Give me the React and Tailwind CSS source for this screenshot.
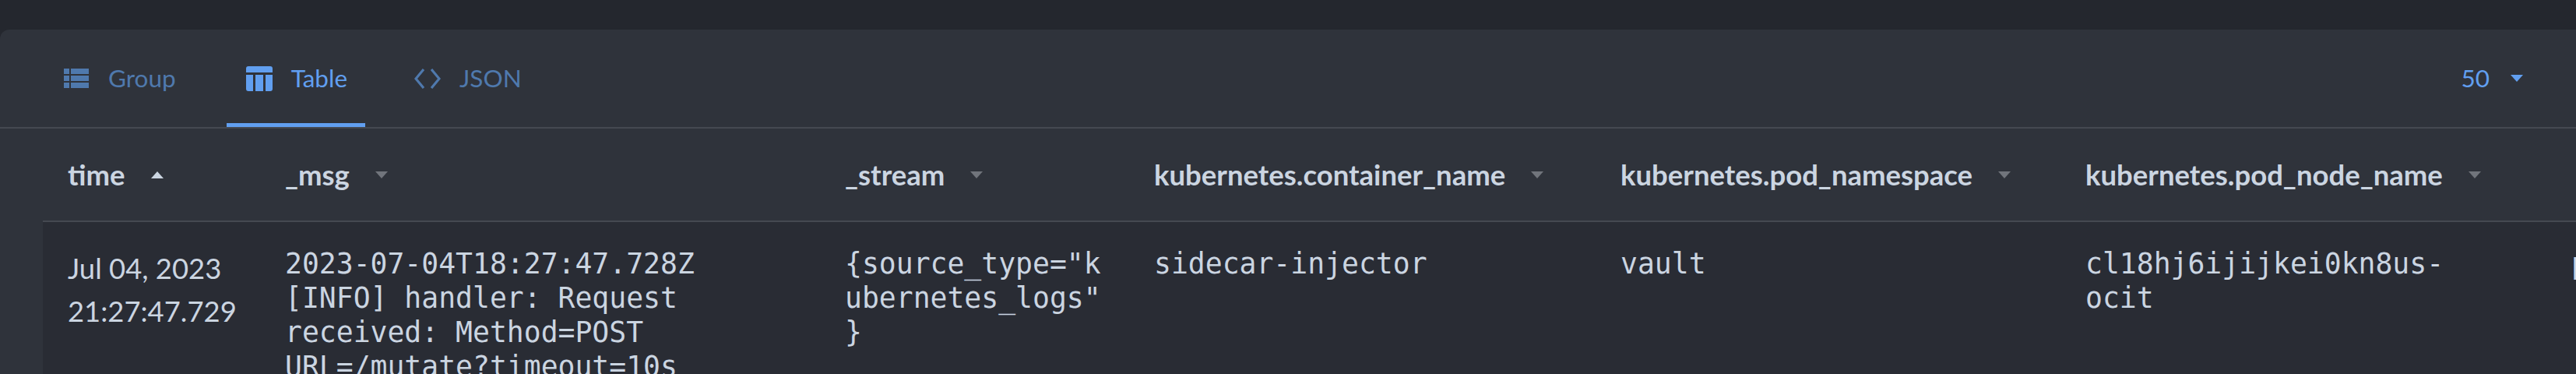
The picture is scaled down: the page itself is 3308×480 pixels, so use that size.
const Caret = ({ up, className }) => (
  <svg width="16" height="9" viewBox="0 0 16 9" className={className}>
    <path d={up ? "M8 0L16 9H0Z" : "M0 0H16L8 9Z"} fill="currentColor" />
  </svg>
);

const GroupIcon = () => (
  <svg width="34" height="26" viewBox="0 0 34 26" fill="currentColor">
    <rect x="1" y="0" width="7" height="7" />
    <rect x="10" y="0" width="23" height="7" />
    <rect x="1" y="9" width="7" height="7" />
    <rect x="10" y="9" width="23" height="7" />
    <rect x="1" y="18" width="7" height="7" />
    <rect x="10" y="18" width="23" height="7" />
  </svg>
);

const TableIcon = () => (
  <svg width="34" height="32" viewBox="0 0 34 32" fill="currentColor">
    <path d="M3 0H31a3 3 0 0 1 3 3V8H0V3a3 3 0 0 1 3-3Z" />
    <path d="M0 11H9V32H3a3 3 0 0 1-3-3Z" />
    <rect x="12" y="11" width="10" height="21" />
    <path d="M25 11H34V29a3 3 0 0 1-3 3H25Z" />
  </svg>
);

const CodeIcon = () => (
  <svg width="34" height="28" viewBox="0 0 34 28" fill="none" stroke="currentColor" strokeWidth="3.2">
    <path d="M12 2L2 14L12 26" />
    <path d="M22 2L32 14L22 26" />
  </svg>
);

const tabs = [
  { label: "Group", icon: <GroupIcon />, cls: "text-[#4f79ad] mr-[2px]" },
  {
    label: "Table",
    icon: <TableIcon />,
    cls: "text-[#619ff0] border-y-[5px] border-t-transparent border-b-[#619ff0] mr-[-2px]",
  },
  { label: "JSON", icon: <CodeIcon />, cls: "text-[#4f79ad]" },
];

const columns = [
  { name: "time", width: "w-[279px]", up: true },
  { name: "_msg", width: "w-[719px]" },
  { name: "_stream", width: "w-[397px]" },
  { name: "kubernetes.container_name", width: "w-[599px]" },
  { name: "kubernetes.pod_namespace", width: "w-[597px]" },
  { name: "kubernetes.pod_node_name", width: "w-[624px]" },
  { name: "", width: "w-[400px]" },
];

const mono = "align-top px-8 pt-8 font-['DejaVu_Sans_Mono',monospace] text-[36.4px] leading-[44px] text-[#cbd5e1] break-words";

export default function App() {
  return (
    <div className="h-[480px] w-[3308px] overflow-hidden bg-[#24272e] pt-[38px] font-['Lato',sans-serif]">
      <div className="h-[442px] overflow-hidden rounded-tl-[12px] bg-[#2f333b]">
        <div className="flex h-[127px] items-stretch justify-between border-b-2 border-[#454951] pl-[56px]">
          <div className="flex h-[125px] gap-[40px]">
            {tabs.map((t) => (
              <div key={t.label} className={`flex items-center gap-[24px] pl-[25px] pr-[23px] text-[31.5px] ${t.cls}`}>
                {t.icon}
                <span>{t.label}</span>
              </div>
            ))}
          </div>
          <div className="flex h-[125px] items-center gap-[27px] pr-[68px] text-[31.5px] text-[#619ff0]">
            <span>50</span>
            <Caret />
          </div>
        </div>
        <div className="ml-[55px] overflow-hidden">
          <table className="w-[3615px] table-fixed border-collapse">
            <thead>
              <tr className="h-[119px] border-b-2 border-[#454951]">
                {columns.map((c) => (
                  <th key={c.name} className={`${c.width} px-8 text-left text-[36.5px] font-bold text-[#cbd5e1]`}>
                    {c.name && (
                      <span className="inline-flex items-center gap-[33px] whitespace-nowrap">
                        {c.name}
                        <Caret up={c.up} className={c.up ? "text-[#cbd5e1]" : "text-[#71757c]"} />
                      </span>
                    )}
                  </th>
                ))}
              </tr>
            </thead>
            <tbody>
              <tr className="bg-[#292c34]">
                <td className="align-top px-8 pt-[32px] text-[36.4px] leading-[55px] text-[#cbd5e1]">
                  Jul 04, 2023
                  <br />
                  21:27:47.729
                </td>
                <td className={mono}>2023-07-04T18:27:47.728Z [INFO] handler: Request received: Method=POST URL=/mutate?timeout=10s</td>
                <td className={`${mono} break-all`}>
                  {'{source_type="kubernetes_logs"'}
                  <wbr />
                  {"}"}
                </td>
                <td className={mono}>sidecar-injector</td>
                <td className={mono}>vault</td>
                <td className={`${mono} pr-[70px]`}>cl18hj6ijijkei0kn8us-ocit</td>
                <td className={mono}>p</td>
              </tr>
            </tbody>
          </table>
        </div>
      </div>
    </div>
  );
}
